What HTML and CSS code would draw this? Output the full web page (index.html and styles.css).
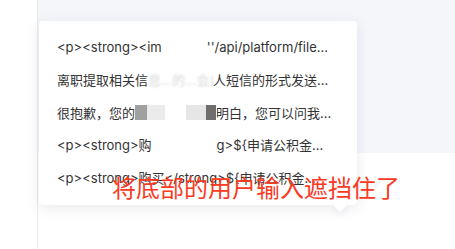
FILE: index.html
```html
<!DOCTYPE html>
<html lang="zh-CN">
<head>
<meta charset="utf-8">
<link rel="stylesheet" href="styles.css">
</head>
<body>
<div class="page">
  <aside class="sidebar"></aside>
  <main class="main">
    <div class="top-band"></div>
    <div class="bottom-band"></div>
  </main>
</div>

<div class="popup">
  <ul class="list">
    <li class="item"><span>&lt;p&gt;&lt;strong&gt;&lt;im</span><span class="gap gap-1"></span><span>''/api/platform/file...</span></li>
    <li class="item"><span>离职提取相关信</span><span class="faded">息...的...会以</span><span>人短信的形式发送...</span></li>
    <li class="item"><span>很抱歉，您的</span><span class="mosaic"><i class="m m-dark"></i><i class="m m-light"></i><i class="m m-white"></i><i class="m m-light2"></i><i class="m m-dark2"></i></span><span>明白，您可以问我...</span></li>
    <li class="item"><span>&lt;p&gt;&lt;strong&gt;购</span><span class="gap gap-4"></span><span>g&gt;${申请公积金...</span></li>
    <li class="item"><span>&lt;p&gt;&lt;strong&gt;购买&lt;/strong&gt;${申请公积金...</span></li>
  </ul>
  <div class="arrow"></div>
</div>

<div class="note">将底部的用户输入遮挡住了</div>
</body>
</html>
```

FILE: styles.css
```css
html, body {
  margin: 0;
  padding: 0;
  background: #ffffff;
  font-family: Inter, "Noto Sans CJK SC", sans-serif;
}

.page {
  display: flex;
  width: 455px;
  height: 249px;
}

.sidebar {
  width: 37px;
  border-right: 1px solid #e9ebf1;
  background: #ffffff;
}

.main {
  flex: 1;
  display: flex;
  flex-direction: column;
}

.top-band {
  height: 153px;
  background: #f5f6fa;
}

.bottom-band {
  flex: 1;
  background: #ffffff;
}

.popup {
  position: absolute;
  left: 39px;
  top: 21px;
  width: 318px;
  height: 184px;
  background: #ffffff;
  border-radius: 4px;
  box-shadow: 0 3px 14px rgba(40, 50, 80, 0.10);
  box-sizing: border-box;
}

.list {
  list-style: none;
  margin: 0;
  padding: 10px 0 0 18px;
}

.item {
  display: flex;
  align-items: center;
  height: 32.5px;
  font-size: 13px;
  color: #333333;
  white-space: nowrap;
  overflow: hidden;
}

.gap {
  display: inline-block;
  height: 14px;
}

.gap-1 { width: 45px; }
.gap-4 { width: 65px; }

.faded {
  color: #d8d8d8;
  filter: blur(1.2px);
  width: 65px;
  overflow: hidden;
}

.mosaic {
  display: inline-flex;
  height: 15px;
}

.m { display: block; height: 15px; }
.m-dark { width: 12px; background: #a0a0a0; }
.m-light { width: 18px; background: #ebebeb; }
.m-white { width: 21px; background: #ffffff; }
.m-light2 { width: 20px; background: #e6e6e6; }
.m-dark2 { width: 10px; background: #6e6e6e; }

.arrow {
  position: absolute;
  left: 296px;
  bottom: -5px;
  width: 10px;
  height: 10px;
  background: #ffffff;
  transform: rotate(45deg);
  box-shadow: 3px 3px 6px rgba(40, 50, 80, 0.06);
}

.note {
  position: absolute;
  left: 112px;
  top: 174px;
  font-family: "Noto Sans CJK SC", sans-serif;
  font-size: 24px;
  line-height: 26px;
  color: #fb3a1f;
  white-space: nowrap;
}
```
